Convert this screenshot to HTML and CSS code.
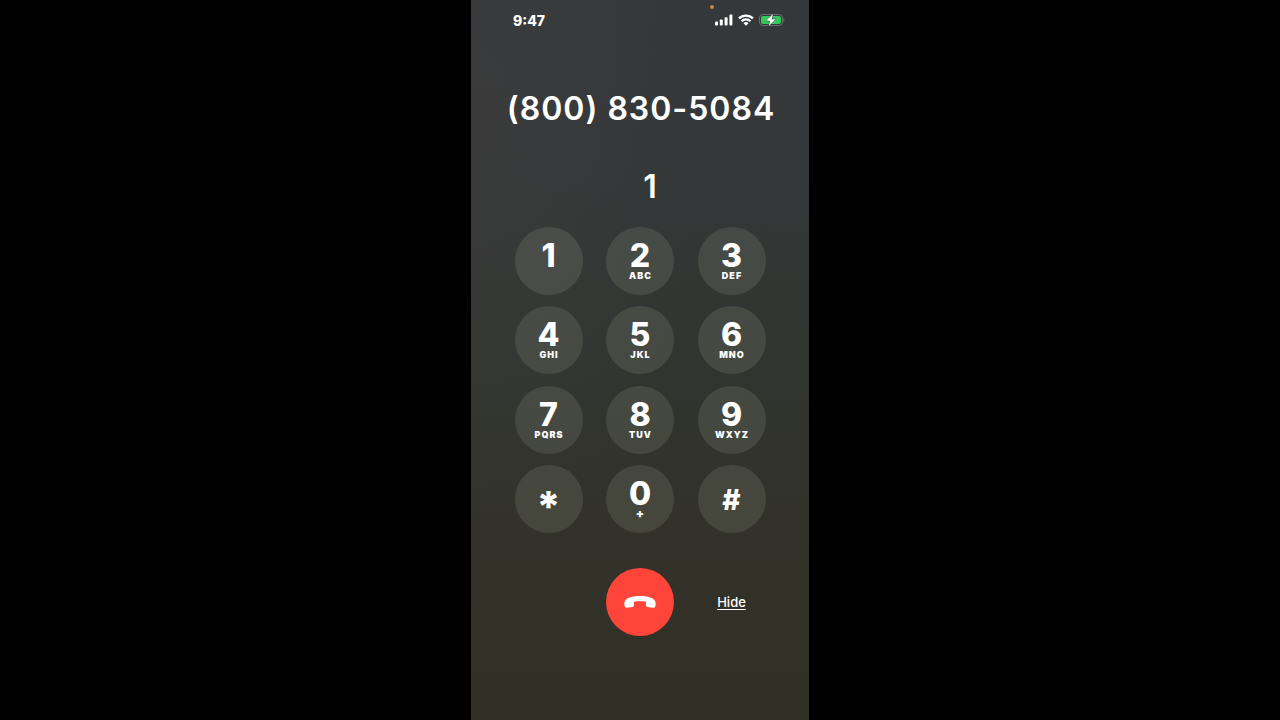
FILE: index.html
```
<!DOCTYPE html>
<html lang="en">

  <head>
    <meta charset="UTF-8">
    <meta name="viewport" content="width=device-width, initial-scale=1">
    <title>Keypad</title>
    <link rel="stylesheet" href="styles.css">
  </head>

  <body>
    <main class="phone">
      <header class="status">
        <span class="time">9:47</span>
        <div class="icons">
          <span class="mic-dot"></span>
          <svg width="18" height="12" viewBox="0 0 18 12" fill="#fff">
            <rect x="0" y="7.4" width="3" height="4" rx="0.9" />
            <rect x="4.8" y="5.4" width="3" height="6" rx="0.9" />
            <rect x="9.6" y="3.2" width="3" height="8.2" rx="0.9" />
            <rect x="14.4" y="0.6" width="3" height="10.8" rx="0.9" />
          </svg>
          <svg width="16" height="12" viewBox="0 0 16 12" fill="none" stroke="#fff" stroke-width="2.2">
            <path d="M1 4.4a10 10 0 0 1 14 0" />
            <path d="M3.5 7.2a6.4 6.4 0 0 1 9 0" />
            <path d="M8 11.8L5.4 9.2a3.7 3.7 0 0 1 5.2 0z" fill="#fff" stroke="none" />
          </svg>
          <svg width="26" height="12" viewBox="0 0 26 12">
            <rect x="0.5" y="0.5" width="23" height="11" rx="3.4" fill="none" stroke="#6c7071" />
            <rect x="2" y="2" width="20" height="8" rx="2" fill="#34c759" />
            <path d="M24.5 4.2c1.1.3 1.1 3.3 0 3.6z" fill="#7d8182" />
            <path d="M14 0L7.2 6.8h4L9.8 12 16.8 5.2h-4z" fill="#fff" stroke="#34403a" stroke-width="1" paint-order="stroke" />
          </svg>
        </div>
      </header>

      <h1 class="number">(800) 830-5084</h1>
      <output class="entered">1</output>

      <div class="keypad">
        <button type="button">1<small>&nbsp;</small></button>
        <button type="button">2<small>ABC</small></button>
        <button type="button">3<small>DEF</small></button>
        <button type="button">4<small>GHI</small></button>
        <button type="button">5<small>JKL</small></button>
        <button type="button">6<small>MNO</small></button>
        <button type="button">7<small>PQRS</small></button>
        <button type="button">8<small>TUV</small></button>
        <button type="button">9<small>WXYZ</small></button>
        <button type="button" class="star">*</button>
        <button type="button">0<small class="plus">+</small></button>
        <button type="button" class="pound">#</button>
      </div>

      <div class="actions">
        <button type="button" class="end" aria-label="End call">
          <svg width="32" height="12" viewBox="0 0 32 12" fill="#fff">
            <path d="M16 0C8.5 0 3.2 1.6 1.2 4.4 0 6.2 0.1 8.8 0.8 10.6 1.2 11.7 2 12 3.2 11.8L8.3 10.9C9.6 10.7 10 10.1 10 8.9V6.7C10 6 10.3 5.7 11 5.6 14 5.1 18 5.1 21 5.6 21.7 5.7 22 6 22 6.7V8.9C22 10.1 22.4 10.7 23.7 10.9L28.8 11.8C30 12 30.8 11.7 31.2 10.6 31.9 8.8 32 6.2 30.8 4.4 28.8 1.6 23.5 0 16 0Z" />
          </svg>
        </button>
        <a class="hide" href="#">Hide</a>
      </div>
    </main>
  </body>

</html>
```

FILE: styles.css
```
* {
  margin: 0;
  padding: 0;
  box-sizing: border-box;
}

body {
  background: #000;
  color: #fff;
  font-family: Inter, "Liberation Sans", sans-serif;
}

.phone {
  display: flex;
  flex-direction: column;
  align-items: center;
  max-width: 338px;
  min-height: 100vh;
  margin: 0 auto;
  background:
    radial-gradient(ellipse at 0% 15%, rgba(66, 62, 62, 0.5), rgba(58, 56, 54, 0) 50%),
    linear-gradient(#34383a 0%, #333738 25%, #31352f 52%, #32322a 72%, #313026 100%);
}

/* status bar */
.status {
  display: flex;
  justify-content: space-between;
  align-items: center;
  align-self: stretch;
  height: 40px;
  padding: 0 24px 0 42px;
}

.time {
  font-size: 14px;
  font-weight: 800;
}

.icons {
  display: flex;
  gap: 5px;
  position: relative;
}

.mic-dot {
  position: absolute;
  left: -5px;
  top: -9px;
  width: 4px;
  height: 4px;
  border-radius: 50%;
  background: #c88a35;
}

/* numbers */
.number,
.entered {
  font-size: 32px;
  font-weight: 600;
  line-height: 40px;
}

.number {
  margin-top: 49px;
  padding-left: 2px;
  letter-spacing: 1px;
  white-space: nowrap;
}

.entered {
  margin-top: 38px;
  padding-left: 20px;
}

/* keys */
.keypad {
  display: grid;
  grid-template-columns: repeat(3, 68px);
  justify-content: space-between;
  align-content: space-between;
  width: 251px;
  height: 306px;
  margin-top: 20px;
}

.keypad button {
  display: flex;
  flex-direction: column;
  align-items: center;
  justify-content: center;
  height: 68px;
  padding-top: 2px;
  border: 0;
  border-radius: 50%;
  background: rgba(215, 225, 200, 0.12);
  color: #fff;
  font-family: inherit;
  font-size: 32px;
  font-weight: 800;
  line-height: 28px;
  cursor: pointer;
}

.keypad small {
  padding-left: 1px;
  font-size: 9px;
  font-weight: 900;
  line-height: 12px;
  letter-spacing: 1px;
}

.keypad .plus {
  font-size: 12px;
}

.keypad .star {
  padding-top: 16px;
  font-size: 42px;
}

.keypad .pound {
  font-size: 28px;
}

/* bottom row */
.actions {
  display: grid;
  grid-template-columns: repeat(3, 68px);
  justify-content: space-between;
  align-items: center;
  width: 251px;
  margin-top: 35px;
}

.end {
  display: flex;
  align-items: center;
  justify-content: center;
  grid-column: 2;
  height: 68px;
  border: 0;
  border-radius: 50%;
  background: #ff453a;
  cursor: pointer;
}

.hide {
  color: #fff;
  font-size: 13px;
  font-weight: 500;
  text-align: center;
  text-underline-offset: 2px;
}
```
